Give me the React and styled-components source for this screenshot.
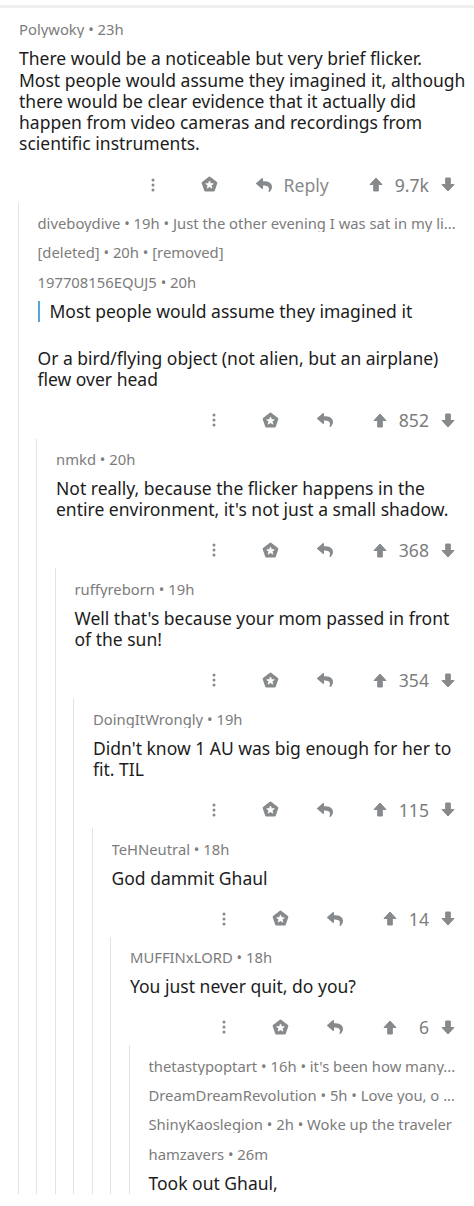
import React from "react";
import styled, { createGlobalStyle } from "styled-components";
import { FaReply } from "react-icons/fa";

const GlobalStyle = createGlobalStyle`
  html, body {
    margin: 0;
    padding: 0;
    background: #ffffff;
  }
  body {
    font-family: "Noto Sans", "Open Sans", sans-serif;
    -webkit-font-smoothing: antialiased;
  }
`;

const Page = styled.div`
  width: 474px;
  box-sizing: border-box;
  padding: 0 4px 0 19px;
  overflow: hidden;
`;

const TopRule = styled.div`
  height: 3px;
  margin: 5px -4px 1px -19px;
  background: #efefef;
`;

const CommentBox = styled.div`
  padding-top: 11.3px;
`;

const Meta = styled.div`
  font-family: "Noto Sans", sans-serif;
  font-size: 14.8px;
  line-height: 18px;
  color: #7c7c7c;
  white-space: nowrap;
  overflow: hidden;
`;

const Body = styled.div`
  margin-top: 10px;
  font-size: 17.5px;
  line-height: 21.3px;
  color: #1c1c1c;
`;

const Paragraph = styled.p`
  margin: 0;
  & + & {
    margin-top: 26px;
  }
`;

const Quote = styled.blockquote`
  margin: 0 0 26px;
  padding-left: 10px;
  border-left: 2px solid #54a6d6;
`;

const Children = styled.div`
  margin-left: -1.5px;
  border-left: 1px solid #e3e3e3;
  padding-left: 19px;
`;

const ActionBar = styled.div`
  display: flex;
  justify-content: flex-end;
  align-items: center;
  height: 36.5px;
  margin-top: 11.5px;
  padding-right: 15px;
  color: #878a8c;
`;

const ActionButton = styled.div`
  display: flex;
  align-items: center;
  margin-right: ${(p) => p.$space}px;
  font-size: 17.6px;
  color: #878a8c;
`;

const ReplyLabel = styled.span`
  margin-left: 12px;
`;

const Vote = styled.div`
  display: flex;
  align-items: center;
`;

const Score = styled.span`
  min-width: 20px;
  margin: 0 12px;
  text-align: right;
  font-size: 17.6px;
  color: #7c7c7c;
`;

const Dots = () => (
  <svg width="4" height="14" viewBox="0 0 4 14">
    <circle cx="2" cy="2" r="1.5" fill="#878a8c" />
    <circle cx="2" cy="7" r="1.5" fill="#878a8c" />
    <circle cx="2" cy="12" r="1.5" fill="#878a8c" />
  </svg>
);

const Award = () => (
  <svg width="17" height="17" viewBox="0 0 20 20">
    <path
      d="M10 2 L18 8 L15 17 L5 17 L2 8 Z"
      fill="#878a8c"
      stroke="#878a8c"
      strokeWidth="2.5"
      strokeLinejoin="round"
    />
    <path
      d="M10 5.8 L11.3 8.8 L14.5 9.1 L12 11.2 L12.8 14.3 L10 12.6 L7.2 14.3 L8 11.2 L5.5 9.1 L8.7 8.8 Z"
      fill="#ffffff"
      stroke="#ffffff"
      strokeWidth="0.8"
      strokeLinejoin="round"
    />
  </svg>
);

const Arrow = ({ down }) => (
  <svg
    width="14"
    height="15"
    viewBox="0 0 14 15"
    style={down ? { transform: "rotate(180deg)" } : undefined}
  >
    <path
      d="M7 1 L13 7.5 H9.3 V14 H4.7 V7.5 H1 Z"
      fill="#878a8c"
      stroke="#878a8c"
      strokeWidth="1"
      strokeLinejoin="round"
    />
  </svg>
);

const Actions = ({ score, withLabel }) => (
  <ActionBar>
    <ActionButton $space={46}>
      <Dots />
    </ActionButton>
    <ActionButton $space={38}>
      <Award />
    </ActionButton>
    <ActionButton $space={40}>
      <FaReply size={16} color="#878a8c" />
      {withLabel && <ReplyLabel>Reply</ReplyLabel>}
    </ActionButton>
    <Vote>
      <Arrow />
      <Score>{score}</Score>
      <Arrow down />
    </Vote>
  </ActionBar>
);

const Comment = ({ c }) => {
  const meta = [c.author, c.time, c.preview].filter(Boolean).join(" • ");
  return (
    <CommentBox>
      <Meta>{meta}</Meta>
      {!c.collapsed && (
        <>
          <Body>
            {c.quote && (
              <Quote>
                <Paragraph>{c.quote}</Paragraph>
              </Quote>
            )}
            {c.body.map((t, i) => (
              <Paragraph key={i}>{t}</Paragraph>
            ))}
          </Body>
          {c.score && <Actions score={c.score} withLabel={c.replyLabel} />}
          {c.children && (
            <Children>
              {c.children.map((k, i) => (
                <Comment key={i} c={k} />
              ))}
            </Children>
          )}
        </>
      )}
    </CommentBox>
  );
};

const thread = {
  author: "Polywoky",
  time: "23h",
  replyLabel: true,
  score: "9.7k",
  body: [
    "There would be a noticeable but very brief flicker. Most\u00a0people would assume they imagined it, although there would be clear evidence that it actually did happen from video cameras and recordings from scientific instruments.",
  ],
  children: [
    {
      collapsed: true,
      author: "diveboydive",
      time: "19h",
      preview: "Just the other evening I was sat in my li...",
    },
    { collapsed: true, author: "[deleted]", time: "20h", preview: "[removed]" },
    {
      author: "197708156EQUJ5",
      time: "20h",
      quote: "Most people would assume they imagined it",
      body: ["Or a bird/flying object (not alien, but an airplane) flew over head"],
      score: "852",
      children: [
        {
          author: "nmkd",
          time: "20h",
          body: [
            "Not really, because the flicker happens in the entire environment, it's not just a small shadow.",
          ],
          score: "368",
          children: [
            {
              author: "ruffyreborn",
              time: "19h",
              body: ["Well that's because your mom passed in front of\u00a0the sun!"],
              score: "354",
              children: [
                {
                  author: "DoingItWrongly",
                  time: "19h",
                  body: ["Didn't know 1 AU was big enough for her to fit. TIL"],
                  score: "115",
                  children: [
                    {
                      author: "TeHNeutral",
                      time: "18h",
                      body: ["God dammit Ghaul"],
                      score: "14",
                      children: [
                        {
                          author: "MUFFINxLORD",
                          time: "18h",
                          body: ["You just never quit, do you?"],
                          score: "6",
                          children: [
                            {
                              collapsed: true,
                              author: "thetastypoptart",
                              time: "16h",
                              preview: "it's been how many...",
                            },
                            {
                              collapsed: true,
                              author: "DreamDreamRevolution",
                              time: "5h",
                              preview: "Love you, o ...",
                            },
                            {
                              collapsed: true,
                              author: "ShinyKaoslegion",
                              time: "2h",
                              preview: "Woke up the traveler",
                            },
                            {
                              author: "hamzavers",
                              time: "26m",
                              body: ["Took out Ghaul,"],
                            },
                          ],
                        },
                      ],
                    },
                  ],
                },
              ],
            },
          ],
        },
      ],
    },
  ],
};

export default function App() {
  return (
    <>
      <GlobalStyle />
      <Page>
        <TopRule />
        <Comment c={thread} />
      </Page>
    </>
  );
}
